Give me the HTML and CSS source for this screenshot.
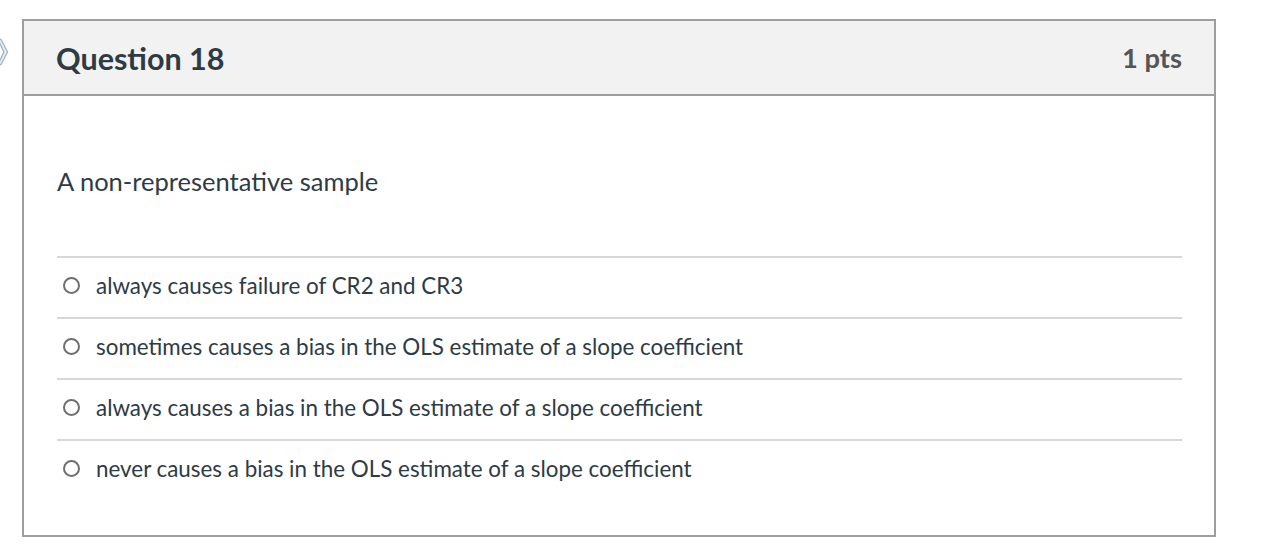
FILE: index.html
```html
<!DOCTYPE html>
<html>
<head>
<meta charset="utf-8">
<link rel="stylesheet" href="styles.css">
</head>
<body>
<div class="page">
  <svg class="nav-arrow" width="12" height="28" viewBox="0 0 12 28" aria-hidden="true">
    <path d="M0 1.5 L3 1.5 L9.5 14 L3 26.5 L0 26.5 L6 14 Z" fill="#eef3f7" stroke="#9fb4c7" stroke-width="1.4" stroke-linejoin="round"/>
  </svg>
  <div class="question">
    <div class="q-header">
      <h2 class="q-title">Question 18</h2>
      <span class="q-pts">1 pts</span>
    </div>
    <div class="q-body">
      <p class="q-text">A non-representative sample</p>
      <ul class="answers">
        <li class="answer"><span class="radio"></span><span class="a-text">always causes failure of CR2 and CR3</span></li>
        <li class="answer"><span class="radio"></span><span class="a-text">sometimes causes a bias in the OLS estimate of a slope coefficient</span></li>
        <li class="answer"><span class="radio"></span><span class="a-text">always causes a bias in the OLS estimate of a slope coefficient</span></li>
        <li class="answer"><span class="radio"></span><span class="a-text">never causes a bias in the OLS estimate of a slope coefficient</span></li>
      </ul>
    </div>
  </div>
</div>
</body>
</html>
```
FILE: styles.css
```css
html, body {
  margin: 0;
  padding: 0;
  background: #ffffff;
  font-family: Lato, "Open Sans", sans-serif;
  color: #2d3b45;
}
.page {
  position: relative;
  padding: 19px 0 0 22px;
  width: 1194px;
}
.nav-arrow {
  position: absolute;
  left: -2px;
  top: 38px;
}
.question {
  border: 2px solid #9e9e9e;
  background: #fff;
}
.q-header {
  display: flex;
  align-items: center;
  justify-content: space-between;
  height: 73px;
  padding: 0 32px 0 32px;
  background: #f2f2f2;
  border-bottom: 2px solid #9e9e9e;
}
.q-title {
  margin: 0;
  font-size: 30.5px;
  font-weight: 700;
  color: #2d3b45;
}
.q-pts {
  font-size: 27.3px;
  font-weight: 700;
  color: #555555;
}
.q-body {
  padding: 70px 32px 35px 33px;
}
.q-text {
  margin: 0 0 60px 0;
  font-size: 25.5px;
  line-height: 30px;
}
.answers {
  list-style: none;
  margin: 0;
  padding: 0;
  border-top: 2px solid #d7d7d7;
}
.answer {
  display: flex;
  align-items: center;
  box-sizing: border-box;
  height: 61px;
  padding-bottom: 5px;
  border-bottom: 2px solid #d7d7d7;
  font-size: 22.4px;
}
.answer:last-child {
  border-bottom: none;
  height: 59px;
}
.radio {
  width: 13px;
  height: 13px;
  border: 2px solid #6f6f6f;
  border-radius: 50%;
  margin: 0 16px 0 6px;
  flex: none;
}
.a-text {
  color: #2d3b45;
}
```
